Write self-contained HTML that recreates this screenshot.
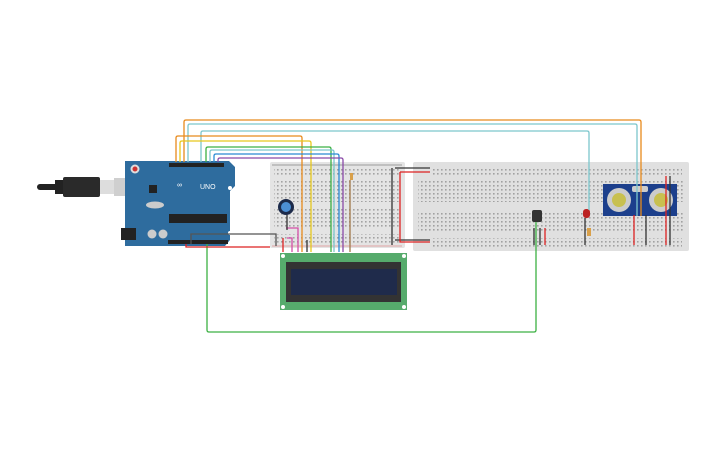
<!DOCTYPE html>
<html><head><style>body{margin:0;background:#fff}svg{display:block}</style></head><body>
<svg width="725" height="453" viewBox="0 0 725 453" xmlns="http://www.w3.org/2000/svg" font-family="Liberation Sans, sans-serif">
<defs>
<pattern id="h" width="4" height="4" patternUnits="userSpaceOnUse"><rect x="1" y="1" width="1.6" height="1.6" fill="#777"/></pattern>
</defs>
<rect x="270" y="162" width="135" height="86" fill="#e4e4e4" rx="2"/>
<rect x="274" y="167" width="126" height="9" fill="url(#h)" opacity=".6"/>
<rect x="274" y="180" width="126" height="22" fill="url(#h)" opacity=".6"/>
<rect x="274" y="207" width="126" height="22" fill="url(#h)" opacity=".6"/>
<rect x="274" y="234" width="126" height="9" fill="url(#h)" opacity=".6"/>
<line x1="272" y1="165" x2="402" y2="165" stroke="#555" stroke-width=".6"/>
<line x1="272" y1="246" x2="402" y2="246" stroke="#d66" stroke-width=".6"/>
<rect x="413" y="162" width="276" height="89" fill="#e0e0e0" rx="2"/>
<rect x="432" y="167" width="250" height="9" fill="url(#h)" opacity=".6"/>
<rect x="418" y="180" width="266" height="22" fill="url(#h)" opacity=".6"/>
<rect x="418" y="211" width="266" height="22" fill="url(#h)" opacity=".6"/>
<rect x="432" y="238" width="250" height="9" fill="url(#h)" opacity=".6"/>
<path d="M392 168 V245 M395 168H430 M395 240H430" stroke="#333" stroke-width="1.3" fill="none"/>
<path d="M400 172 V242H430 M400 172H430" stroke="#d22" stroke-width="1.3" fill="none"/>
<rect x="37" y="184" width="22" height="6" rx="3" fill="#222"/>
<rect x="55" y="180" width="10" height="14" fill="#222"/>
<rect x="63" y="177" width="37" height="20" rx="2" fill="#2a2a2a"/>
<rect x="100" y="180" width="16" height="14" fill="#ddd"/>
<rect x="114" y="178" width="28" height="18" fill="#cfcfcf"/>
<path d="M125 161 H229 L235 167 V186 L230 191 V240 L225 246 H125 Z" fill="#2e6c9e"/>
<rect x="169" y="163" width="55" height="4" fill="#222"/>
<rect x="168" y="240" width="60" height="4" fill="#222"/>
<rect x="169" y="214" width="58" height="9" fill="#222"/>
<rect x="121" y="228" width="15" height="12" fill="#222"/>
<circle cx="135" cy="169" r="3.5" fill="#c33" stroke="#ddd" stroke-width="2"/>
<ellipse cx="155" cy="205" rx="9" ry="3.5" fill="#ccc"/>
<circle cx="152" cy="234" r="4.5" fill="#ccc"/><circle cx="163" cy="234" r="4.5" fill="#ccc"/>
<rect x="149" y="185" width="8" height="8" fill="#222"/>
<text x="200" y="189" font-size="7" fill="#fff">UNO</text>
<text x="177" y="187" font-size="7" fill="#fff">∞</text>
<circle cx="230" cy="188" r="2" fill="#fff"/><circle cx="230" cy="233" r="2" fill="#fff"/>
<circle cx="286" cy="207" r="8" fill="#1c2a4a"/><circle cx="286" cy="207" r="5" fill="#4c8fd4"/>
<rect x="280" y="253" width="127" height="57" fill="#56ab6c"/>
<rect x="286" y="262" width="115" height="40" fill="#333"/>
<rect x="291" y="269" width="106" height="26" fill="#1f2b4b"/>
<circle cx="283" cy="256" r="2" fill="#fff"/><circle cx="404" cy="256" r="2" fill="#fff"/>
<circle cx="283" cy="307" r="2" fill="#fff"/><circle cx="404" cy="307" r="2" fill="#fff"/>
<rect x="603" y="184" width="74" height="32" fill="#1c3f8c"/>
<circle cx="619" cy="200" r="12" fill="#ccc"/><circle cx="619" cy="200" r="7" fill="#c8c050"/>
<circle cx="661" cy="200" r="12" fill="#ccc"/><circle cx="661" cy="200" r="7" fill="#c8c050"/>
<rect x="632" y="186" width="16" height="6" rx="2" fill="#ccc"/>
<rect x="532" y="210" width="10" height="12" rx="2" fill="#333"/>
<rect x="583" y="209" width="7" height="9" rx="3" fill="#b22"/>
<rect x="587" y="228" width="4" height="8" fill="#d9a04a"/>
<rect x="350" y="173" width="3" height="7" fill="#d9a04a"/>
<g fill="none" stroke-width="1.3">
<path d="M184 162V122Q184 120 186 120H639Q641 120 641 122V216" stroke="#e88a1c"/>
<path d="M188 162V126Q188 124 190 124H635Q637 124 637 126V216" stroke="#7cc6cc"/>
<path d="M201 162V133Q201 131 203 131H587Q589 131 589 133V210" stroke="#7cc6cc"/>
<path d="M176 162V138Q176 136 178 136H300Q302 136 302 138V252" stroke="#e88a1c"/>
<path d="M180 162V143Q180 141 182 141H309Q311 141 311 143V252" stroke="#e8c81c"/>
<path d="M206 162V149Q206 147 208 147H329Q331 147 331 149V252" stroke="#3cb043"/>
<path d="M210 162V152Q210 150 212 150H332Q334 150 334 152V252" stroke="#7cc6cc"/>
<path d="M214 162V156Q214 154 216 154H337Q339 154 339 156V252" stroke="#2a8ad4"/>
<path d="M218 162V160Q218 158 220 158H341Q343 158 343 160V252" stroke="#8a4aa8"/>
<path d="M207 244V330Q207 332 209 332H534Q536 332 536 330V222" stroke="#3cb043"/>
<path d="M186 244V247H270" stroke="#d22"/>
<path d="M191 244V234H276V246" stroke="#555"/>
<path d="M286 228H298V252 M287 238H292V252" stroke="#d34fa8"/>
<path d="M283 238V252" stroke="#d22"/>
<path d="M287 215V230 M307 240V252" stroke="#333"/>
<path d="M350 180V252" stroke="#a0784a"/>
<path d="M534 228V245 M540 228V245" stroke="#333"/>
<path d="M545 228V245 M634 215V245 M666 176V245" stroke="#d22"/>
<path d="M585 218V245 M646 215V245 M670 176V245" stroke="#333"/>
</g>
</svg>
</body></html>
